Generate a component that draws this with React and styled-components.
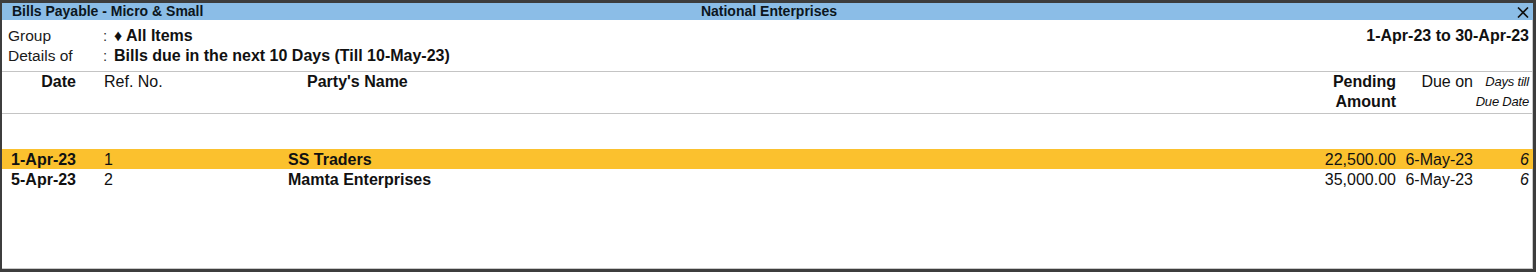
import React from 'react';
import styled, { createGlobalStyle } from 'styled-components';

const GlobalStyle = createGlobalStyle`
  html, body {
    margin: 0;
    padding: 0;
    background: #fff;
  }
  body {
    font-family: "Liberation Sans", Arial, sans-serif;
    color: #111;
  }
`;

const BILLS = [
  { date: '1-Apr-23', ref: '1', party: 'SS Traders', amount: '22,500.00', due: '6-May-23', days: 6 },
  { date: '5-Apr-23', ref: '2', party: 'Mamta Enterprises', amount: '35,000.00', due: '6-May-23', days: 6 }
];

const COLUMNS = '76px 210px 1fr 110px 77px 58px';

export default function App() {
  const selected = 0;

  return (
    <>
      <GlobalStyle />
      <Window>
        <TitleBar>
          <TitleLeft>Bills Payable - Micro &amp; Small</TitleLeft>
          <TitleCenter>National Enterprises</TitleCenter>
          <CloseButton aria-label="Close">
            <svg width="12" height="11" viewBox="0 0 12 11">
              <path d="M1 0.5 L11 10.5 M11 0.5 L1 10.5" stroke="#111" strokeWidth="1.6" fill="none" />
            </svg>
          </CloseButton>
        </TitleBar>

        <Info>
          <InfoRow>
            <InfoLabel>Group</InfoLabel>
            <Colon>:</Colon>
            <InfoValue>&#9830; All Items</InfoValue>
            <Period>1-Apr-23 to 30-Apr-23</Period>
          </InfoRow>
          <InfoRow>
            <InfoLabel>Details of</InfoLabel>
            <Colon>:</Colon>
            <InfoValue>Bills due in the next 10 Days (Till 10-May-23)</InfoValue>
            <Period />
          </InfoRow>
        </Info>

        <Divider />

        <HeaderGrid>
          <HeadCell $align="right" $bold>Date</HeadCell>
          <HeadCell $pad="26px">Ref. No.</HeadCell>
          <HeadCell $pad="19px" $bold>Party's Name</HeadCell>
          <HeadCell $align="right" $bold>
            Pending
            <br />
            Amount
          </HeadCell>
          <HeadCell $align="right">Due on</HeadCell>
          <DaysHead>
            Days till
            <br />
            Due Date
          </DaysHead>
        </HeaderGrid>

        <Divider />

        <Body>
          {BILLS.map((bill, i) => (
            <BillRow key={bill.ref} $active={i === selected}>
              <Cell $align="right" $bold>{bill.date}</Cell>
              <Cell $pad="26px">{bill.ref}</Cell>
              <Cell $bold>{bill.party}</Cell>
              <Cell $align="right">{bill.amount}</Cell>
              <Cell $align="right">{bill.due}</Cell>
              <Cell $align="right" $italic $padRight="4px">{bill.days}</Cell>
            </BillRow>
          ))}
        </Body>
      </Window>
    </>
  );
}

const Window = styled.div`
  box-sizing: border-box;
  width: 1536px;
  height: 272px;
  display: flex;
  flex-direction: column;
  background: #fff;
  border-style: solid;
  border-color: #3d3d3d;
  border-width: 3px 3px 3px 2px;
  box-shadow: inset -1px -1px 0 #c9c9c9;
  overflow: hidden;
`;

const TitleBar = styled.div`
  height: 17px;
  flex-shrink: 0;
  display: grid;
  grid-template-columns: 1fr auto 1fr;
  align-items: center;
  background: #8bbde7;
  padding: 0 4px 0 10px;
  font-size: 14px;
  font-weight: bold;
  color: #0c1620;
  line-height: 17px;
`;

const TitleLeft = styled.div`
  white-space: nowrap;
`;

const TitleCenter = styled.div`
  white-space: nowrap;
  margin-left: -3px;
`;

const CloseButton = styled.div`
  justify-self: end;
  display: flex;
  align-items: center;
  padding-top: 1px;
`;

const Info = styled.div`
  padding: 6px 4px 0 6px;
  height: 51px;
  flex-shrink: 0;
  box-sizing: border-box;
  display: flex;
  flex-direction: column;
`;

const InfoRow = styled.div`
  display: grid;
  grid-template-columns: 95px 11px 1fr auto;
  height: 20px;
  line-height: 20px;
  font-size: 16px;
`;

const InfoLabel = styled.span`
  color: #1a1a1a;
  font-size: 15.5px;
`;

const Colon = styled.span`
  font-size: 15px;
  color: #333;
`;

const InfoValue = styled.span`
  font-weight: bold;
`;

const Period = styled.span`
  font-weight: bold;
  text-align: right;
`;

const Divider = styled.div`
  height: 1px;
  background: #c4c4c4;
  flex-shrink: 0;
`;

const HeaderGrid = styled.div`
  display: grid;
  grid-template-columns: ${COLUMNS};
  height: 41px;
  flex-shrink: 0;
  align-items: start;
`;

const HeadCell = styled.div`
  font-size: 16px;
  line-height: 20px;
  font-weight: ${(p) => (p.$bold ? 'bold' : 'normal')};
  text-align: ${(p) => p.$align || 'left'};
  padding-left: ${(p) => p.$pad || '0'};
  padding-right: 2px;
  white-space: nowrap;
`;

const DaysHead = styled.div`
  font-size: 13px;
  font-style: italic;
  line-height: 20px;
  text-align: right;
  padding-right: 4px;
  white-space: nowrap;
  letter-spacing: -0.2px;
`;

const Body = styled.div`
  padding-top: 35px;
  display: flex;
  flex-direction: column;
`;

const BillRow = styled.div`
  display: grid;
  grid-template-columns: ${COLUMNS};
  height: 20px;
  line-height: 21px;
  font-size: 16px;
  background: ${(p) => (p.$active ? '#fbc12e' : 'transparent')};
`;

const Cell = styled.div`
  font-weight: ${(p) => (p.$bold ? 'bold' : 'normal')};
  font-style: ${(p) => (p.$italic ? 'italic' : 'normal')};
  text-align: ${(p) => p.$align || 'left'};
  padding-left: ${(p) => p.$pad || '0'};
  padding-right: ${(p) => p.$padRight || '2px'};
  white-space: nowrap;
`;
